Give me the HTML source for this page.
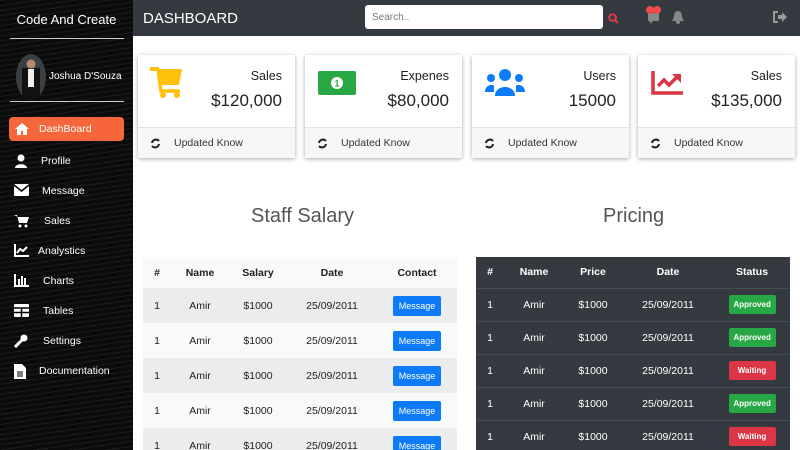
<!DOCTYPE html>
<html><head><meta charset="utf-8">
<style>
*{box-sizing:border-box;margin:0;padding:0}
html,body{width:800px;height:450px;overflow:hidden}
body{font-family:"Liberation Sans",sans-serif;background:#fff}
#w{position:relative;width:800px;height:450px;overflow:hidden}
.side{position:absolute;left:0;top:0;width:133px;height:450px;background:#0b0b0b;
background-image:repeating-linear-gradient(172deg,rgba(255,255,255,0.07) 0 1px,transparent 1px 5px);color:#fff}
.brand{position:absolute;top:12px;width:133px;text-align:center;font-size:13px}
.hr{position:absolute;left:10px;width:114px;height:1px;background:#ccc}
.avatar{position:absolute;left:16px;top:54px;width:30px;height:46px;border-radius:50%;background:#3a3f44;overflow:hidden}
.uname{position:absolute;left:49px;top:71px;font-size:10px}
.nav{position:absolute;left:9px;width:115px;height:24px;font-size:10.5px;line-height:24px}
.nav.act{background:#f5673a;border-radius:4px}
.nav svg{position:absolute;left:5px;top:5px}
.nav span{position:absolute}
.top{position:absolute;left:133px;top:0;width:667px;height:36px;background:#343a40}
.top .t{position:absolute;left:10px;top:10px;color:#fff;font-size:15px}
.search{position:absolute;left:232px;top:5px;width:238px;height:24px;background:#fff;border-radius:3px;font-size:10px;color:#777;padding:7px 0 0 7px}
.card{position:absolute;top:55px;width:157px;height:103px;background:#fff;box-shadow:0 1px 4px rgba(0,0,0,.35);border-radius:2px}
.card .f{position:absolute;left:0;bottom:0;width:100%;height:31px;background:#f7f7f7;border-top:1px solid #e3e3e3;font-size:10.5px;color:#333}
.card .f span{position:absolute;left:36px;top:9px}
.card .f svg{position:absolute;left:12px;top:10px}
.card .l{position:absolute;right:13px;top:14px;font-size:12.5px;color:#222}
.card .v{position:absolute;right:13px;top:36px;font-size:17px;color:#222}
.card .ic{position:absolute;left:13px;top:12px}
h2{position:absolute;font-weight:normal;font-size:20px;color:#555;top:205px}
table{position:absolute;border-collapse:collapse;font-size:10.5px;text-align:center;table-layout:fixed}
th{font-weight:bold;height:31px}
.t1{left:143px;top:257px;width:314px;color:#222}
.t1 th{background:#f8f9fa}
.t1 td{height:35px}
.t1 tr:nth-child(odd) td{background:#f8f9fa}
.t1 tr:nth-child(even) td{background:#ebecee}
.btn{display:inline-block;background:#0d7bf7;color:#fff;font-size:9px;padding:5px 6px;border-radius:2px}
.t2{left:476px;top:257px;width:314px;background:#343a40;color:#fff}
.t2 td{height:33px;border-top:1px solid #454d55}
.b{display:inline-block;color:#fff;font-size:8px;font-weight:bold;padding:5px 5px;border-radius:2px;width:47px}
.g{background:#28a745}.r{background:#dc3545}
</style></head><body><div id="w">
<div class="side">
<div class="brand">Code And Create</div>
<div class="hr" style="top:38px"></div>
<div class="avatar"><svg width="30" height="46"><rect x="6" y="14" width="18" height="32" fill="#111"/><rect x="12" y="15" width="6" height="18" fill="#eee"/><circle cx="15" cy="10" r="4.5" fill="#b98a70"/></svg></div>
<div class="uname">Joshua D'Souza</div>
<div class="hr" style="top:101px"></div>
<div class="nav act" style="top:117px"><svg width="16" height="14" viewBox="0 0 16 14"><path d="M8 1L1 7h2v6h4V9h2v4h4V7h2z" fill="#fff"/></svg><span style="left:30px">DashBoard</span></div>
<div class="nav" style="top:149px"><svg width="14" height="14"><circle cx="7" cy="4" r="3.5" fill="#fff"/><path d="M1 14c0-5 12-5 12 0z" fill="#fff"/></svg><span style="left:32px">Profile</span></div>
<div class="nav" style="top:179px"><svg width="15" height="12"><rect width="15" height="12" rx="1" fill="#fff"/><path d="M0 1l7.5 6L15 1" stroke="#000" stroke-width="1.5" fill="none"/></svg><span style="left:33px">Message</span></div>
<div class="nav" style="top:209px"><svg width="15" height="14"><path d="M0 1h3l2 8h8l2-6H4" fill="#fff"/><circle cx="6" cy="12" r="1.5" fill="#fff"/><circle cx="12" cy="12" r="1.5" fill="#fff"/></svg><span style="left:35px">Sales</span></div>
<div class="nav" style="top:239px"><svg width="15" height="13"><path d="M1 0v12h14" stroke="#fff" stroke-width="2" fill="none"/><path d="M3 9l3-4 3 2 4-4" stroke="#fff" stroke-width="2" fill="none"/></svg><span style="left:29px">Analystics</span></div>
<div class="nav" style="top:269px"><svg width="15" height="13"><path d="M1 0v12h14" stroke="#fff" stroke-width="2" fill="none"/><rect x="4" y="5" width="2" height="6" fill="#fff"/><rect x="7" y="2" width="2" height="9" fill="#fff"/><rect x="10" y="4" width="2" height="7" fill="#fff"/></svg><span style="left:34px">Charts</span></div>
<div class="nav" style="top:299px"><svg width="15" height="13"><rect width="15" height="13" rx="1" fill="#fff"/><path d="M0 4h15M0 8.5h15M7.5 4v9" stroke="#000" stroke-width="1.5"/></svg><span style="left:34px">Tables</span></div>
<div class="nav" style="top:329px"><svg width="14" height="14"><path d="M1 13l7-7" stroke="#fff" stroke-width="3"/><circle cx="10" cy="4" r="3.5" fill="#fff"/></svg><span style="left:34px">Settings</span></div>
<div class="nav" style="top:359px"><svg width="12" height="15"><path d="M0 0h8l4 4v11H0z" fill="#fff"/><path d="M3 8h6M3 10h6M3 12h6" stroke="#000"/></svg><span style="left:30px">Documentation</span></div>
</div>
<div class="top"><div class="t">DASHBOARD</div><div class="search">Search..</div>
<svg style="position:absolute;left:475px;top:13px" width="11" height="11"><circle cx="4.5" cy="4.5" r="3.3" stroke="#e03a4a" stroke-width="2" fill="none"/><path d="M7 7l3 3" stroke="#e03a4a" stroke-width="2"/></svg>
<svg style="position:absolute;left:512px;top:5px" width="20" height="20"><path d="M3 8h11v8H8l-3 3v-3H3z" fill="#888"/><circle cx="5" cy="5" r="4" fill="#ef4b4b"/><circle cx="12" cy="5" r="4" fill="#ef4b4b"/></svg>
<svg style="position:absolute;left:539px;top:10px" width="12" height="14"><path d="M6 1c-3 0-4 3-4 6l-2 4h12l-2-4c0-3-1-6-4-6z" fill="#888"/><circle cx="6" cy="12" r="2" fill="#888"/></svg>
<svg style="position:absolute;left:640px;top:11px" width="14" height="12"><path d="M5 1H1v10h4" stroke="#999" stroke-width="2" fill="none"/><path d="M5 4h4V1l5 5-5 5V8H5z" fill="#999"/></svg>
</div>
<div class="card" style="left:138px"><svg style="position:absolute;left:0;top:0" width="50" height="50"><path d="M12 12h9v4h-9z" fill="#ffc107"/><path d="M19 14h25l-3 16H22z" fill="#ffc107"/><path d="M20 14l3 22h19" stroke="#ffc107" stroke-width="3.5" fill="none"/><circle cx="25" cy="40" r="3" fill="#ffc107"/><circle cx="39" cy="40" r="3" fill="#ffc107"/></svg><div class="l">Sales</div><div class="v">$120,000</div><div class="f"><svg width="11" height="11"><path d="M2 5a4 4 0 0 1 7-2M9 6a4 4 0 0 1-7 2" stroke="#222" stroke-width="2" fill="none"/></svg><span>Updated Know</span></div></div>
<div class="card" style="left:305px"><svg class="ic" width="38" height="24" style="top:16px"><rect width="38" height="24" rx="2" fill="#28a745"/><circle cx="19" cy="12" r="6" fill="#fff"/><text x="19" y="15.5" font-size="9" text-anchor="middle" fill="#28a745" font-weight="bold" font-family="Liberation Sans">1</text></svg><div class="l">Expenes</div><div class="v">$80,000</div><div class="f"><svg width="11" height="11"><path d="M2 5a4 4 0 0 1 7-2M9 6a4 4 0 0 1-7 2" stroke="#222" stroke-width="2" fill="none"/></svg><span>Updated Know</span></div></div>
<div class="card" style="left:472px"><svg class="ic" width="40" height="30" style="top:13px"><circle cx="20" cy="7" r="6" fill="#0d7bf7"/><circle cx="6" cy="10" r="4" fill="#0d7bf7"/><circle cx="34" cy="10" r="4" fill="#0d7bf7"/><path d="M10 28c0-12 20-12 20 0z" fill="#0d7bf7"/><path d="M0 24c0-8 9-8 9-6v6zM40 24c0-8-9-8-9-6v6z" fill="#0d7bf7"/></svg><div class="l">Users</div><div class="v">15000</div><div class="f"><svg width="11" height="11"><path d="M2 5a4 4 0 0 1 7-2M9 6a4 4 0 0 1-7 2" stroke="#222" stroke-width="2" fill="none"/></svg><span>Updated Know</span></div></div>
<div class="card" style="left:638px"><svg class="ic" width="32" height="24" style="top:16px"><path d="M2 0v22h30" stroke="#dc3545" stroke-width="3.5" fill="none"/><path d="M7 15l6-6 5 5 8-8" stroke="#dc3545" stroke-width="3.5" fill="none"/><path d="M21 3h9v9z" fill="#dc3545"/></svg><div class="l">Sales</div><div class="v">$135,000</div><div class="f"><svg width="11" height="11"><path d="M2 5a4 4 0 0 1 7-2M9 6a4 4 0 0 1-7 2" stroke="#222" stroke-width="2" fill="none"/></svg><span>Updated Know</span></div></div>
<h2 style="left:251px">Staff Salary</h2>
<h2 style="left:603px">Pricing</h2>
<table class="t1">
<colgroup><col style="width:28px"><col style="width:58px"><col style="width:58px"><col style="width:90px"><col style="width:80px"></colgroup>
<tr><th>#</th><th>Name</th><th>Salary</th><th>Date</th><th>Contact</th></tr>
<tr><td>1</td><td>Amir</td><td>$1000</td><td>25/09/2011</td><td><span class="btn">Message</span></td></tr>
<tr><td>1</td><td>Amir</td><td>$1000</td><td>25/09/2011</td><td><span class="btn">Message</span></td></tr>
<tr><td>1</td><td>Amir</td><td>$1000</td><td>25/09/2011</td><td><span class="btn">Message</span></td></tr>
<tr><td>1</td><td>Amir</td><td>$1000</td><td>25/09/2011</td><td><span class="btn">Message</span></td></tr>
<tr><td>1</td><td>Amir</td><td>$1000</td><td>25/09/2011</td><td><span class="btn">Message</span></td></tr>
</table>
<table class="t2">
<colgroup><col style="width:28px"><col style="width:60px"><col style="width:58px"><col style="width:92px"><col style="width:76px"></colgroup>
<tr><th>#</th><th>Name</th><th>Price</th><th>Date</th><th>Status</th></tr>
<tr><td>1</td><td>Amir</td><td>$1000</td><td>25/09/2011</td><td><span class="b g">Approved</span></td></tr>
<tr><td>1</td><td>Amir</td><td>$1000</td><td>25/09/2011</td><td><span class="b g">Approved</span></td></tr>
<tr><td>1</td><td>Amir</td><td>$1000</td><td>25/09/2011</td><td><span class="b r">Waiting</span></td></tr>
<tr><td>1</td><td>Amir</td><td>$1000</td><td>25/09/2011</td><td><span class="b g">Approved</span></td></tr>
<tr><td>1</td><td>Amir</td><td>$1000</td><td>25/09/2011</td><td><span class="b r">Waiting</span></td></tr>
</table>
</div></body></html>
